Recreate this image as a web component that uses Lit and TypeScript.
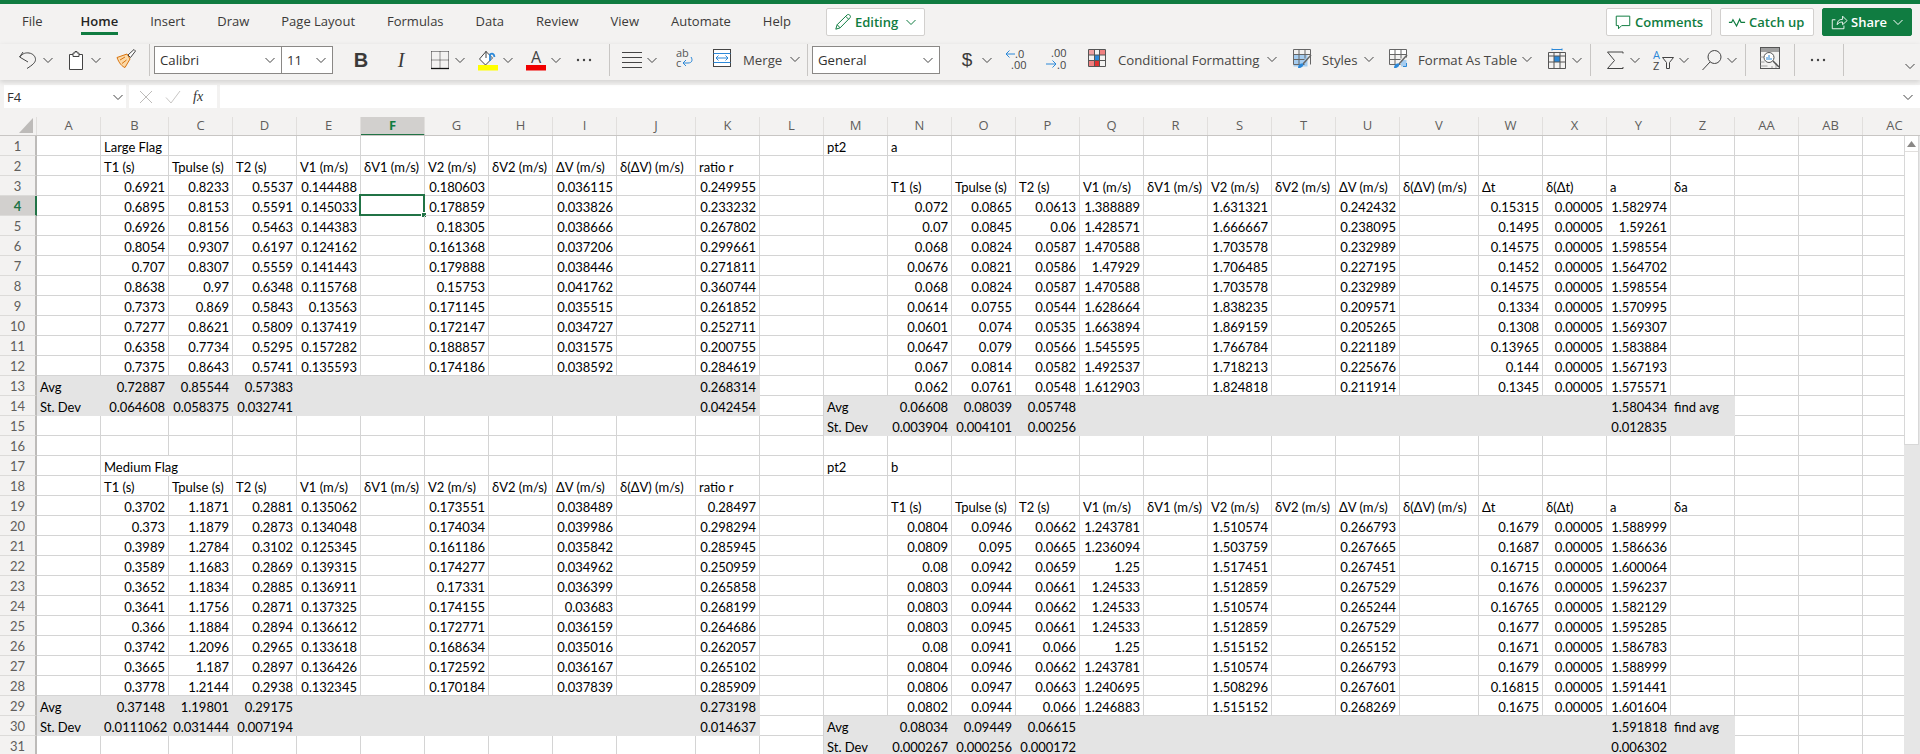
import { LitElement, html, css } from "lit";
import { customElement } from "lit/decorators.js";

const COLS = ["A","B","C","D","E","F","G","H","I","J","K","L","M","N","O","P","Q","R","S","T","U","V","W","X","Y","Z","AA","AB","AC"];
const D: Record<string,string> = {};
const put = (r: number, cols: string, vals: string) => {
  const cs = cols.split(" ");
  const vs = vals.split("|");
  cs.forEach((c, i) => { if (vs[i]) D[c + r] = vs[i]; });
};
const L = "B C D E G I K";
const R = "N O P Q S U W X Y";
const HL = "B C D E F G H I J K";
const HR = "N O P Q R S T U V W X Y Z";
const hl = "T1 (s)|Tpulse (s)|T2 (s)|V1 (m/s)|δV1 (m/s)|V2 (m/s)|δV2 (m/s)|ΔV (m/s)|δ(ΔV) (m/s)|ratio r";
const hr = "T1 (s)|Tpulse (s)|T2 (s)|V1 (m/s)|δV1 (m/s)|V2 (m/s)|δV2 (m/s)|ΔV (m/s)|δ(ΔV) (m/s)|Δt|δ(Δt)|a|δa";
put(1, "B M N", "Large Flag|pt2|a");
put(2, HL, hl);
put(3, HR, hr);
put(17, "B M N", "Medium Flag|pt2|b");
put(18, HL, hl);
put(19, HR, hr);
const left: [number,string][] = [
[3,"0.6921|0.8233|0.5537|0.144488|0.180603|0.036115|0.249955"],
[4,"0.6895|0.8153|0.5591|0.145033|0.178859|0.033826|0.233232"],
[5,"0.6926|0.8156|0.5463|0.144383|0.18305|0.038666|0.267802"],
[6,"0.8054|0.9307|0.6197|0.124162|0.161368|0.037206|0.299661"],
[7,"0.707|0.8307|0.5559|0.141443|0.179888|0.038446|0.271811"],
[8,"0.8638|0.97|0.6348|0.115768|0.15753|0.041762|0.360744"],
[9,"0.7373|0.869|0.5843|0.13563|0.171145|0.035515|0.261852"],
[10,"0.7277|0.8621|0.5809|0.137419|0.172147|0.034727|0.252711"],
[11,"0.6358|0.7734|0.5295|0.157282|0.188857|0.031575|0.200755"],
[12,"0.7375|0.8643|0.5741|0.135593|0.174186|0.038592|0.284619"],
[19,"0.3702|1.1871|0.2881|0.135062|0.173551|0.038489|0.28497"],
[20,"0.373|1.1879|0.2873|0.134048|0.174034|0.039986|0.298294"],
[21,"0.3989|1.2784|0.3102|0.125345|0.161186|0.035842|0.285945"],
[22,"0.3589|1.1683|0.2869|0.139315|0.174277|0.034962|0.250959"],
[23,"0.3652|1.1834|0.2885|0.136911|0.17331|0.036399|0.265858"],
[24,"0.3641|1.1756|0.2871|0.137325|0.174155|0.03683|0.268199"],
[25,"0.366|1.1884|0.2894|0.136612|0.172771|0.036159|0.264686"],
[26,"0.3742|1.2096|0.2965|0.133618|0.168634|0.035016|0.262057"],
[27,"0.3665|1.187|0.2897|0.136426|0.172592|0.036167|0.265102"],
[28,"0.3778|1.2144|0.2938|0.132345|0.170184|0.037839|0.285909"],
];
left.forEach(([r,v]) => put(r, L, v));
const right: [number,string][] = [
[4,"0.072|0.0865|0.0613|1.388889|1.631321|0.242432|0.15315|0.00005|1.582974"],
[5,"0.07|0.0845|0.06|1.428571|1.666667|0.238095|0.1495|0.00005|1.59261"],
[6,"0.068|0.0824|0.0587|1.470588|1.703578|0.232989|0.14575|0.00005|1.598554"],
[7,"0.0676|0.0821|0.0586|1.47929|1.706485|0.227195|0.1452|0.00005|1.564702"],
[8,"0.068|0.0824|0.0587|1.470588|1.703578|0.232989|0.14575|0.00005|1.598554"],
[9,"0.0614|0.0755|0.0544|1.628664|1.838235|0.209571|0.1334|0.00005|1.570995"],
[10,"0.0601|0.074|0.0535|1.663894|1.869159|0.205265|0.1308|0.00005|1.569307"],
[11,"0.0647|0.079|0.0566|1.545595|1.766784|0.221189|0.13965|0.00005|1.583884"],
[12,"0.067|0.0814|0.0582|1.492537|1.718213|0.225676|0.144|0.00005|1.567193"],
[13,"0.062|0.0761|0.0548|1.612903|1.824818|0.211914|0.1345|0.00005|1.575571"],
[20,"0.0804|0.0946|0.0662|1.243781|1.510574|0.266793|0.1679|0.00005|1.588999"],
[21,"0.0809|0.095|0.0665|1.236094|1.503759|0.267665|0.1687|0.00005|1.586636"],
[22,"0.08|0.0942|0.0659|1.25|1.517451|0.267451|0.16715|0.00005|1.600064"],
[23,"0.0803|0.0944|0.0661|1.24533|1.512859|0.267529|0.1676|0.00005|1.596237"],
[24,"0.0803|0.0944|0.0662|1.24533|1.510574|0.265244|0.16765|0.00005|1.582129"],
[25,"0.0803|0.0945|0.0661|1.24533|1.512859|0.267529|0.1677|0.00005|1.595285"],
[26,"0.08|0.0941|0.066|1.25|1.515152|0.265152|0.1671|0.00005|1.586783"],
[27,"0.0804|0.0946|0.0662|1.243781|1.510574|0.266793|0.1679|0.00005|1.588999"],
[28,"0.0806|0.0947|0.0663|1.240695|1.508296|0.267601|0.16815|0.00005|1.591441"],
[29,"0.0802|0.0944|0.066|1.246883|1.515152|0.268269|0.1675|0.00005|1.601604"],
];
right.forEach(([r,v]) => put(r, R, v));
put(13, "A B C D K", "Avg|0.72887|0.85544|0.57383|0.268314");
put(14, "A B C D K", "St. Dev|0.064608|0.058375|0.032741|0.042454");
put(29, "A B C D K", "Avg|0.37148|1.19801|0.29175|0.273198");
put(30, "A B C D K", "St. Dev|0.0111062|0.031444|0.007194|0.014637");
put(14, "M N O P Y Z", "Avg|0.06608|0.08039|0.05748|1.580434|find avg");
put(15, "M N O P Y", "St. Dev|0.003904|0.004101|0.00256|0.012835");
put(30, "M N O P Y Z", "Avg|0.08034|0.09449|0.06615|1.591818|find avg");
put(31, "M N O P Y", "St. Dev|0.000267|0.000256|0.000172|0.006302");

const isGray = (i: number, r: number) =>
  (i <= 10 && [13,14,29,30].includes(r)) || (i >= 12 && i <= 25 && [14,15,30,31].includes(r));

const chev = html`<svg class="chev" viewBox="0 0 12 12"><path d="M1.5 4 6 8.5 10.5 4" fill="none" stroke="#444" stroke-width="1"/></svg>`;
const gchev = html`<svg class="chev" viewBox="0 0 12 12"><path d="M1.5 4 6 8.5 10.5 4" fill="none" stroke="#107c41" stroke-width="1"/></svg>`;
const wchev = html`<svg class="chev" viewBox="0 0 12 12"><path d="M1.5 4 6 8.5 10.5 4" fill="none" stroke="#fff" stroke-width="1"/></svg>`;

const I = {
  undo: html`<svg class="ic" viewBox="0 0 24 24"><path d="M7 4 3.6 9 12 14M3.6 9C7 5 10 4.6 13 5c4 .6 6.5 3.4 6.5 6.5 0 3-3 5.500-8.500 9" fill="none" stroke="#444"/></svg>`,
  clip: html`<svg class="ic" viewBox="0 0 24 24"><path d="M9 6.500H5.500v15h13v-15H15M9 8.500V5h2V3.500h2V5h2v3.500z" fill="#fff" stroke="#444"/></svg>`,
  brush: html`<svg class="ic" viewBox="0 0 24 24"><path d="M3 11.500 13 8l3 5-5 8.500c-3-1-6-4.500-8-10z" fill="#fbd9a8" stroke="#d9730d"/><path d="M6 14l5-3M8 17.500l4.500-3.500" stroke="#d9730d" fill="none"/><path d="M14 9l6-5.500 1.500 1.500-5 6.500z" fill="#fff" stroke="#444"/></svg>`,
  border: html`<svg class="ic" viewBox="0 0 24 24"><path d="M3.500 3.500h17M3.500 3.500v17M20.500 3.500v17M12 3.500v17M3.500 12h17" stroke="#333" stroke-dasharray="1 1" fill="none"/><path d="M3 20.500h18" stroke="#111" stroke-width="1.300"/></svg>`,
  fill: html`<svg class="ic" viewBox="0 0 24 24"><path d="M10 3.500 3.500 11l6 6 7-7z" fill="#fff" stroke="#444"/><path d="M10 10V3" stroke="#444"/><path d="M14 13V6.500c2-1.500 4-1 4.500 2.500" fill="none" stroke="#2b88d8" stroke-width="1.800"/><rect x="2" y="17" width="20" height="5.500" fill="#ffff00"/></svg>`,
  font: html`<svg class="ic" viewBox="0 0 24 24"><rect x="2" y="17" width="20" height="5.500" fill="#f00000"/><text x="12" y="15" text-anchor="middle" font-family="Open Sans, sans-serif" font-size="16" fill="#444">A</text></svg>`,
  align: html`<svg class="ic" viewBox="0 0 24 24"><path d="M2 4.500h20M2 9.500h20M2 14.500h20M2 19.500h20" stroke="#444"/></svg>`,
  wrap: html`<svg class="ic" viewBox="0 0 24 24"><text x="4" y="11" font-family="Open Sans, sans-serif" font-size="11" fill="#555">ab</text><text x="4" y="21" font-family="Open Sans, sans-serif" font-size="11" fill="#555">c</text><path d="M19 11c2 3 1 6-3 6h-5m3-3-3 3 3 3" fill="none" stroke="#2b88d8"/></svg>`,
  merge: html`<svg class="ic" viewBox="0 0 24 24"><rect x="3.500" y="3.500" width="17" height="17" fill="#fff" stroke="#444"/><path d="M3.500 7.500h17M3.500 16.500h17" stroke="#2b88d8"/><path d="M6 12h12M8.500 9.500 6 12l2.500 2.500M15.500 9.500 18 12l-2.500 2.500" fill="none" stroke="#2b88d8"/></svg>`,
  decL: html`<svg class="ic" viewBox="0 0 24 24"><path d="M1 8h9M4.500 4.500 1 8l3.500 3.500" fill="none" stroke="#2b88d8"/><text x="10" y="12" font-family="Open Sans, sans-serif" font-size="11" fill="#444">.0</text><text x="6" y="23" font-family="Open Sans, sans-serif" font-size="11" fill="#444">.00</text></svg>`,
  decR: html`<svg class="ic" viewBox="0 0 24 24"><text x="6" y="11" font-family="Open Sans, sans-serif" font-size="11" fill="#444">.00</text><path d="M1 18h10M7.500 14.500 11 18l-3.500 3.500" fill="none" stroke="#2b88d8"/><text x="12" y="23" font-family="Open Sans, sans-serif" font-size="11" fill="#444">.0</text></svg>`,
  cf: html`<svg class="ic" viewBox="0 0 24 24"><rect x="4" y="3.500" width="5.500" height="5.500" fill="#f0a0a0"/><rect x="14.500" y="3.500" width="5.500" height="5.500" fill="#f08080"/><rect x="9.500" y="9" width="5" height="5.500" fill="#2b88d8"/><rect x="4" y="14.500" width="5.500" height="6" fill="#f08080"/><rect x="9.500" y="14.500" width="5" height="6" fill="#e03030"/><path d="M3.500 3.500h17v17h-17zM9.500 3.500v17M14.500 3.500v17M3.500 9h17M3.500 14.500h17" fill="none" stroke="#555"/></svg>`,
  styles: html`<svg class="ic" viewBox="0 0 24 24"><rect x="3.500" y="8.500" width="14" height="12" fill="#a6cdf0"/><path d="M3.500 3.500h17v15M3.500 3.500v15h11M3.500 8.500h17M9 3.500v15M15 3.500v9M3.500 13.500h11" fill="none" stroke="#666"/><path d="M21 9 13 18" stroke="#666" stroke-width="1.500"/><path d="M8 22c0-4 3-5 5-4.500 1 2-1 5-5 4.500z" fill="#2b88d8"/></svg>`,
  fat: html`<svg class="ic" viewBox="0 0 24 24"><rect x="3.500" y="3.500" width="17" height="5" fill="#fff"/><rect x="15" y="14" width="5.500" height="6.500" fill="#a6cdf0"/><path d="M3.500 3.500h17v8M3.500 3.500v15h11M3.500 8.500h17M9 3.500v15M15 3.500v9M3.500 13.500h11" fill="none" stroke="#666"/><path d="M21 9 13 18" stroke="#666" stroke-width="1.500"/><path d="M8 22c0-4 3-5 5-4.500 1 2-1 5-5 4.500z" fill="#2b88d8"/><path d="M17 20.500h3.500V17" fill="none" stroke="#2b88d8"/></svg>`,
  table: html`<svg class="ic" viewBox="0 0 24 24"><rect x="9" y="8" width="6" height="6" fill="#2b88d8"/><path d="M3.500 4.500h17v16h-17zM3.500 8h17M3.500 14h17M9 4.500v16M15 4.500v16" fill="none" stroke="#555"/><path d="M7 1.500h10M7 .5v2M17 .5v2" stroke="#2b88d8" fill="none"/></svg>`,
  sum: html`<svg class="ic" viewBox="0 0 24 24"><path d="M20 5.500V4H4.500l7 8.500-7 8H20V19" fill="none" stroke="#444"/></svg>`,
  sort: html`<svg class="ic" viewBox="0 0 24 24"><text x="1" y="11" font-family="Open Sans, sans-serif" font-size="11" fill="#2b88d8">A</text><text x="1" y="22" font-family="Open Sans, sans-serif" font-size="11" fill="#444">Z</text><path d="M10.500 9.500h11l-4 5v6h-3v-6z" fill="none" stroke="#444"/></svg>`,
  find: html`<svg class="ic" viewBox="0 0 24 24"><circle cx="14.500" cy="9" r="6.500" fill="none" stroke="#444"/><path d="M10 14 2.500 22" stroke="#444"/></svg>`,
  ideas: html`<svg class="ic ic-l" viewBox="0 0 24 24"><rect x="2.500" y="1.500" width="19" height="21" fill="#f3f2f1" stroke="#555"/><rect x="3" y="2" width="18" height="4" fill="#a0a0a0"/><path d="M2.500 11h5M2.500 16h4M2.500 20h7M14 20v2M18 17v5" stroke="#a0a0a0"/><circle cx="11" cy="11.500" r="5" fill="#fff" stroke="#555"/><path d="M9 14v-3M11 14V9M13 14v-2" stroke="#2b88d8"/><path d="M15 15l6 6" stroke="#555" stroke-width="1.500"/></svg>`,
  pencil: html`<svg class="sic" viewBox="0 0 20 20"><path d="M2 18l1.500-5L14.500 2.200c1-.8 2-.8 3 .2s1 2 .2 3L6.800 16.500zM3.500 13l3.300 3.500M13 3.700l3.300 3.300" fill="none" stroke="#107c41" stroke-width="1.100"/></svg>`,
  comment: html`<svg class="sic" viewBox="0 0 20 20"><path d="M2.500 3.500h15v10.500h-9L5 17.500V14H2.500z" fill="none" stroke="#107c41" stroke-width="1.100"/></svg>`,
  pulse: html`<svg class="sic" viewBox="0 0 20 20"><path d="M1 10.500h3l1.500-3 4 7 3.500-7.500 1.500 3.500H19" fill="none" stroke="#107c41" stroke-width="1.300"/></svg>`,
  share: html`<svg class="sic" viewBox="0 0 20 20"><path d="M6 7.500H2.500v10h13V14M8 13c0-4 2-6 6-6V3.500l5 5-5 4.500V10c-3 0-5 1-6 3z" fill="none" stroke="#fff" stroke-width="1"/></svg>`,
  dots: html`<svg class="ic" viewBox="0 0 24 24"><circle cx="6" cy="12" r="1.200" fill="#444"/><circle cx="12" cy="12" r="1.200" fill="#444"/><circle cx="18" cy="12" r="1.200" fill="#444"/></svg>`,
};

@customElement("app-root")
export class AppRoot extends LitElement {
  static styles = css`
    :host { display: flex; flex-direction: column; width: 1920px; height: 100vh; overflow: hidden; background: #f3f2f1; font-family: "Open Sans", "Liberation Sans", sans-serif; color: #333; }
    * { box-sizing: border-box; }
    .topbar { height: 4px; background: #107c41; flex: none; }
    .tabs { height: 40px; flex: none; display: flex; align-items: flex-start; padding: 4px 8px 0 22px; gap: 32px; font-size: 13px; }
    .tab { height: 27px; line-height: 26px; white-space: nowrap; color: #3b3a39; }
    .tab.on { border-bottom: 3px solid #107c41; font-weight: 600; color: #252423; margin-left: 6px; }
    .pill { height: 28px; display: flex; align-items: center; gap: 3px; background: #fff; border: 1px solid #d2d0ce; border-radius: 2px; color: #107c41; font-weight: 600; font-size: 13px; white-space: nowrap; padding: 0 7px; }
    .pill .chev { margin-left: auto; }
    .pill.edit { width: 99px; margin-left: 3px; }
    .pill.comm { width: 106px; }
    .pill.catch { width: 94px; }
    .pill.share { width: 90px; background: #107c41; border-color: #107c41; color: #fff; }
    .rgt { margin-left: auto; display: flex; gap: 8px; }
    .sic { width: 18px; height: 18px; flex: none; }
    .toolbar { height: 36px; flex: none; display: flex; align-items: center; padding: 0 0 4px 12px; font-size: 13.200px; background: #f3f2f1; box-shadow: 0 2px 5px rgba(0,0,0,.14); position: relative; color: #484644; }
    .ic { width: 24px; height: 24px; flex: none; }
    .chev { width: 12px; height: 12px; flex: none; }
    .btn { width: 48px; height: 28px; display: flex; align-items: center; padding-left: 4px; gap: 2px; flex: none; }
    .sep { width: 1px; height: 32px; background: #c8c6c4; flex: none; }
    .sel { height: 28px; background: #fff; border: 1px solid #8a8886; display: flex; align-items: center; justify-content: space-between; padding: 0 5px; font-size: 13.200px; color: #323130; flex: none; }
    .sel.font { width: 128px; }
    .sel.size { width: 51px; border-left: 0; padding-left: 5px; }
    .sel.num { width: 128px; }
    .big { width: 40px; text-align: center; flex: none; font-size: 20px; line-height: 28px; color: #3b3a39; }
    .bold { font-family: "Liberation Sans", sans-serif; font-weight: 700; }
    .ital { font-family: "Liberation Serif", serif; font-style: italic; }
    .w32 { width: 32px; padding-left: 4px; flex: none; display: flex; }
    .lbl { white-space: nowrap; flex: none; }
    .w40 { width: 40px; } .w35 { width: 35px; } .w98 { width: 98px; } .w142 { width: 142px; }
    .dollar { width: 24px; text-align: center; font-size: 19px; line-height: 24px; color: #3b3a39; flex: none; font-family: "Liberation Sans", sans-serif; }
    .m1 { margin-left: 1px; } .m3 { margin-left: 3px; } .m4 { margin-left: 4px; } .m5 { margin-left: 5px; } .m6 { margin-left: 6px; } .m7 { margin-left: 7px; } .m8 { margin-left: 8px; } .m9 { margin-left: 9px; } .m11 { margin-left: 11px; } .m12 { margin-left: 12px; } .m14 { margin-left: 14px; } .m16 { margin-left: 16px; }
    .collapse { margin-left: auto; margin-right: 4px; align-self: flex-end; }
    .fbar { height: 23px; flex: none; margin-top: 5px; display: flex; gap: 3px; padding-left: 4px; }
    .name { width: 122px; background: #fff; display: flex; align-items: center; justify-content: space-between; padding: 0 2px 0 3px; font-size: 13px; color: #323130; }
    .fbtns { width: 88px; background: #fff; display: flex; align-items: center; padding-left: 9px; gap: 11px; }
    .fbtns svg { width: 16px; height: 16px; flex: none; }
    .fx { font-family: "Liberation Serif", serif; font-style: italic; font-size: 14px; color: #333; margin-left: 1px; }
    .finput { flex: 1; background: #fff; display: flex; align-items: center; justify-content: flex-end; padding-right: 6px; }
    .colhead { margin-top: 9px; flex: none; height: 19px; display: grid; grid-template-columns: var(--cols); background: #f3f2f1; border-bottom: 1px solid #c8c6c4; overflow: hidden; font-size: 13px; }
    :host { --cols: 37px 64px 68px repeat(7, 64px) 79px repeat(11, 64px) 79px repeat(7, 64px); }
    .ch { border-right: 1px solid #e1dfdd; text-align: center; line-height: 17px; color: #605e5c; height: 18px; }
    .ch.on { background: #d2d0ce; color: #107c41; font-weight: 700; border-bottom: 2px solid #217346; height: 19px; }
    .corner { border-right: 1px solid #e1dfdd; display: flex; justify-content: flex-end; }
    .corner svg { width: 18px; height: 18px; }
    .body { flex: 1; min-height: 0; display: flex; background: #fff; }
    .sheet { flex: 1; min-width: 0; overflow: hidden; }
    .grid { display: grid; grid-template-columns: var(--cols); grid-auto-rows: 20px; font-family: Lato, "Liberation Sans", sans-serif; font-size: 13px; color: #000; }
    .rh { background: #f3f2f1; border-right: 2px solid #bdbbb9; border-bottom: 1px solid #dcdbd9; text-align: center; line-height: 20px; color: #605e5c; font-size: 13px; }
    .rh.on { background: #d2d0ce; color: #217346; font-weight: 700; border-right-color: #217346; }
    .c { border-right: 1px solid #d4d4d4; border-bottom: 1px solid #d4d4d4; padding: 0 3px; line-height: 22px; white-space: nowrap; position: relative; }
    .c.n { text-align: right; }
    .c.g { background: #e4e4e4; border-color: #e4e4e4; }
    .c.over { border-right-color: transparent; }
    .selbox { position: absolute; left: -2px; top: -2px; right: -1px; bottom: -1px; border: 2px solid #217346; }
    .handle { position: absolute; right: -4px; bottom: -4px; width: 6px; height: 6px; background: #217346; border: 1px solid #fff; }
    .scroll { width: 16px; flex: none; background: #e6e6e6; display: flex; flex-direction: column; }
    .thumb { width: 15px; height: 309px; background: #fff; border: 1px solid #d8d8d8; border-top: 0; }
    .up { height: 16px; background: #fff; display: flex; align-items: center; justify-content: center; border-bottom: 1px solid #e1dfdd; }
    .up svg { width: 9px; height: 6px; }
  `;

  private cells() {
    const out = [];
    for (let r = 1; r <= 31; r++) {
      out.push(html`<div class="rh ${r === 4 ? "on" : ""}">${r}</div>`);
      COLS.forEach((c, i) => {
        const t = D[c + r];
        const num = !!t && /^[\d.]+$/.test(t);
        const g = isGray(i, r);
        const over = c === "B" && r === 17;
        const sel = c === "F" && r === 4;
        out.push(html`<div class="c ${num ? "n" : ""} ${g ? "g" : ""} ${over ? "over" : ""}">${t ?? ""}${sel ? html`<div class="selbox"><div class="handle"></div></div>` : ""}</div>`);
      });
    }
    return out;
  }

  render() {
    return html`
      <div class="topbar"></div>
      <div class="tabs">
        <div class="tab">File</div><div class="tab on">Home</div><div class="tab">Insert</div><div class="tab">Draw</div><div class="tab">Page Layout</div><div class="tab">Formulas</div><div class="tab">Data</div><div class="tab">Review</div><div class="tab">View</div><div class="tab">Automate</div><div class="tab">Help</div>
        <div class="pill edit">${I.pencil}<span>Editing</span>${gchev}</div>
        <div class="rgt">
          <div class="pill comm">${I.comment}<span>Comments</span></div>
          <div class="pill catch">${I.pulse}<span>Catch up</span></div>
          <div class="pill share">${I.share}<span>Share</span>${wchev}</div>
        </div>
      </div>
      <div class="toolbar">
        <div class="btn">${I.undo}${chev}</div>
        <div class="btn">${I.clip}${chev}</div>
        <div class="m6">${I.brush}</div>
        <div class="sep m11"></div>
        <div class="sel font m4"><span>Calibri</span>${chev}</div>
        <div class="sel size"><span>11</span>${chev}</div>
        <div class="big bold m8">B</div>
        <div class="big ital">I</div>
        <div class="btn m3">${I.border}${chev}</div>
        <div class="btn">${I.fill}${chev}</div>
        <div class="btn">${I.font}${chev}</div>
        <div class="w32">${I.dots}</div>
        <div class="sep m9"></div>
        <div class="btn m6">${I.align}${chev}</div>
        <div class="m8">${I.wrap}</div>
        <div class="m14">${I.merge}</div>
        <div class="lbl w40 m9">Merge</div>
        <div class="m6">${chev}</div>
        <div class="sep m6"></div>
        <div class="sel num m4"><span>General</span>${chev}</div>
        <div class="btn m11"><span class="dollar">$</span>${chev}</div>
        <div class="m6">${I.decL}</div>
        <div class="m16">${I.decR}</div>
        <div class="m16">${I.cf}</div>
        <div class="lbl w142 m9">Conditional Formatting</div>
        <div class="m6">${chev}</div>
        <div class="m12">${I.styles}</div>
        <div class="lbl w35 m8">Styles</div>
        <div class="m6">${chev}</div>
        <div class="m11">${I.fat}</div>
        <div class="lbl w98 m8">Format As Table</div>
        <div class="m5">${chev}</div>
        <div class="btn m8">${I.table}${chev}</div>
        <div class="sep m1"></div>
        <div class="btn m8">${I.sum}${chev}</div>
        <div class="btn m1">${I.sort}${chev}</div>
        <div class="btn">${I.find}${chev}</div>
        <div class="sep m1"></div>
        <div class="m12">${I.ideas}</div>
        <div class="sep m12"></div>
        <div class="w32 m7">${I.dots}</div>
        <div class="sep m9"></div>
        <div class="collapse">${chev}</div>
      </div>
      <div class="fbar">
        <div class="name"><span>F4</span>${chev}</div>
        <div class="fbtns">
          <svg viewBox="0 0 16 16"><path d="M2 2l12 12M14 2 2 14" stroke="#bdbbb9" fill="none"/></svg>
          <svg viewBox="0 0 16 16"><path d="M1 8.500 6 14 15 2" stroke="#c8c6c4" fill="none"/></svg>
          <span class="fx">fx</span>
        </div>
        <div class="finput">${chev}</div>
      </div>
      <div class="colhead">
        <div class="corner"><svg viewBox="0 0 18 18"><path d="M15 1v15H1z" fill="#bdbbb9"/></svg></div>
        ${COLS.map((c) => html`<div class="ch ${c === "F" ? "on" : ""}">${c}</div>`)}
      </div>
      <div class="body">
        <div class="sheet"><div class="grid">${this.cells()}</div></div>
        <div class="scroll">
          <div class="thumb"><div class="up"><svg viewBox="0 0 9 6"><path d="M4.500 0 9 6H0z" fill="#8a8886"/></svg></div></div>
        </div>
      </div>
    `;
  }
}
